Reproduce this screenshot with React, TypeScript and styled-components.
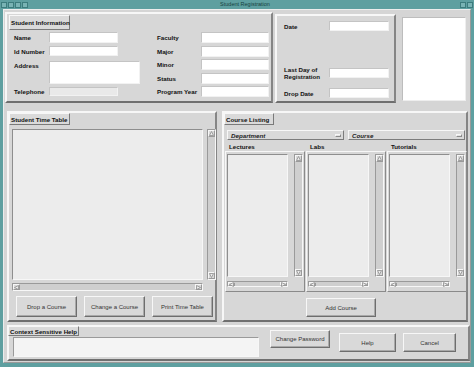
import React from 'react';
import styled, { createGlobalStyle } from 'styled-components';

const TEAL = '#5e9fa0';
const LIGHT = '#f7f7f7';
const DARK = '#858585';
const BG = '#d5d5d5';

const GlobalStyle = createGlobalStyle`
  * { box-sizing: border-box; }
  html, body { margin: 0; padding: 0; background: ${TEAL}; }
  body { font-family: "Liberation Sans", Arial, Helvetica, sans-serif; }
`;

const Window = styled.div`
  width: 474px;
  height: 367px;
  background: ${TEAL};
  display: flex;
  flex-direction: column;
  overflow: hidden;
`;

const TitleBar = styled.div`
  height: 9px;
  display: flex;
  align-items: center;
  padding: 0 1px;
`;

const WinGroup = styled.div<{ $end?: boolean }>`
  flex: 1;
  display: flex;
  gap: 1px;
  justify-content: ${(p) => (p.$end ? 'flex-end' : 'flex-start')};
`;

const WinBtn = styled.span`
  width: 6px;
  height: 6px;
  border: 1px solid #3c7c7d;
  background: #79b3b4;
`;

const Title = styled.span`
  font-size: 5.5px;
  color: #163f40;
  padding-left: 16px;
  line-height: 9px;
`;

const Frame = styled.div`
  flex: 1;
  margin: 0 3px 4px 3px;
  background: ${BG};
  border-top: 1px solid #ececec;
  border-left: 1px solid #ececec;
  border-right: 1px solid #9a9a9a;
  border-bottom: 1px solid #9a9a9a;
  display: flex;
  flex-direction: column;
`;

const Row = styled.div<{ $mt: number }>`
  display: flex;
  align-items: flex-start;
  margin-top: ${(p) => p.$mt}px;
`;

const Panel = styled.div<{ $w: number; $h: number; $ml: number; $mt?: number }>`
  width: ${(p) => p.$w}px;
  height: ${(p) => p.$h}px;
  margin-left: ${(p) => p.$ml}px;
  margin-top: ${(p) => p.$mt ?? 0}px;
  background: #d7d7d7;
  border: 2px solid;
  border-color: ${LIGHT} ${DARK} #6f6f6f ${LIGHT};
  display: flex;
  flex-direction: column;
  align-items: flex-start;
`;

const Tab = styled.div<{ $w: number; $h: number; $ml?: number; $mt?: number }>`
  width: ${(p) => p.$w}px;
  height: ${(p) => p.$h}px;
  margin-left: ${(p) => p.$ml ?? 0}px;
  margin-top: ${(p) => p.$mt ?? 0}px;
  background: #dadada;
  border: 1px solid;
  border-color: ${LIGHT} #7a7a7a #7a7a7a ${LIGHT};
  font-size: 6.2px;
  font-weight: bold;
  color: #111;
  display: flex;
  align-items: center;
  padding-left: 1px;
  white-space: nowrap;
`;

const InfoBody = styled.div`
  display: flex;
  margin-top: 2px;
  padding-left: 7px;
`;

const FieldColumn = styled.div<{ $w?: number; $ml?: number; $gap?: number }>`
  display: flex;
  flex-direction: column;
  width: ${(p) => (p.$w ? `${p.$w}px` : 'auto')};
  margin-left: ${(p) => p.$ml ?? 0}px;
  gap: ${(p) => p.$gap ?? 0}px;
`;

const FieldRow = styled.div<{ $mt?: number; $top?: boolean }>`
  display: flex;
  align-items: ${(p) => (p.$top ? 'flex-start' : 'center')};
  margin-top: ${(p) => p.$mt ?? 0}px;
`;

const Label = styled.span<{ $w: number; $pt?: number }>`
  width: ${(p) => p.$w}px;
  padding-top: ${(p) => p.$pt ?? 0}px;
  font-size: 6.2px;
  font-weight: bold;
  color: #111;
  line-height: 7px;
  white-space: nowrap;
`;

const Input = styled.div<{ $w: number; $h: number; $off?: boolean }>`
  width: ${(p) => p.$w}px;
  height: ${(p) => p.$h}px;
  background: ${(p) => (p.$off ? '#e9e9e9' : '#ffffff')};
  border: 1px solid;
  border-color: #c4c4c4 #f2f2f2 #f2f2f2 #c4c4c4;
`;

const DateGrid = styled.div`
  display: flex;
  flex-direction: column;
  padding: 5px 0 0 7px;
`;

const Photo = styled.div`
  width: 64px;
  height: 84px;
  margin-left: 6px;
  margin-top: 5px;
  background: #ffffff;
  border: 1px solid;
  border-color: #bdbdbd #eeeeee #eeeeee #bdbdbd;
`;

const ListArea = styled.div<{ $cols: string; $rows: string; $cg: number; $rg: number; $ml: number; $mt: number }>`
  display: grid;
  grid-template-columns: ${(p) => p.$cols};
  grid-template-rows: ${(p) => p.$rows};
  column-gap: ${(p) => p.$cg}px;
  row-gap: ${(p) => p.$rg}px;
  margin-left: ${(p) => p.$ml}px;
  margin-top: ${(p) => p.$mt}px;
`;

const ListBox = styled.div`
  background: #ececec;
  border: 1px solid;
  border-color: #8e8e8e ${LIGHT} ${LIGHT} #8e8e8e;
`;

const ScrollTrack = styled.div<{ $v?: boolean }>`
  display: flex;
  flex-direction: ${(p) => (p.$v ? 'column' : 'row')};
  justify-content: space-between;
  background: #cfcfcf;
  border: 1px solid;
  border-color: #9a9a9a ${LIGHT} ${LIGHT} #9a9a9a;
`;

const Arrow = styled.span<{ $v?: boolean }>`
  width: ${(p) => (p.$v ? '100%' : '7px')};
  height: ${(p) => (p.$v ? '7px' : '100%')};
  display: flex;
  align-items: center;
  justify-content: center;
  background: #d9d9d9;
  border: 1px solid;
  border-color: ${LIGHT} #9a9a9a #9a9a9a ${LIGHT};
`;

type Dir = 'up' | 'down' | 'left' | 'right';
const tri: Record<Dir, string> = {
  up: '2.5,0.5 4.5,4.5 0.5,4.5',
  down: '0.5,0.5 4.5,0.5 2.5,4.5',
  left: '0.5,2.5 4.5,0.5 4.5,4.5',
  right: '0.5,0.5 4.5,2.5 0.5,4.5',
};

const ArrowIcon: React.FC<{ dir: Dir }> = ({ dir }) => (
  <svg width="5" height="5" viewBox="0 0 5 5">
    <polygon points={tri[dir]} fill="#ececec" stroke="#8f8f8f" strokeWidth="0.8" />
  </svg>
);

const Scrollbar: React.FC<{ vertical?: boolean }> = ({ vertical }) => (
  <ScrollTrack $v={vertical}>
    <Arrow $v={vertical}>
      <ArrowIcon dir={vertical ? 'up' : 'left'} />
    </Arrow>
    <Arrow $v={vertical}>
      <ArrowIcon dir={vertical ? 'down' : 'right'} />
    </Arrow>
  </ScrollTrack>
);

const VSlot = styled.div`
  grid-row: 1;
  grid-column: 2;
  display: flex;
  & > * { flex: 1; }
`;

const HSlot = styled.div`
  grid-row: 2;
  grid-column: 1;
  display: flex;
  & > * { flex: 1; }
`;

const ButtonRow = styled.div<{ $ml: number; $mt: number; $gap: number }>`
  display: flex;
  gap: ${(p) => p.$gap}px;
  margin-left: ${(p) => p.$ml}px;
  margin-top: ${(p) => p.$mt}px;
`;

const Button = styled.button<{ $w: number; $h: number; $ml?: number; $mt?: number }>`
  width: ${(p) => p.$w}px;
  height: ${(p) => p.$h}px;
  margin-left: ${(p) => p.$ml ?? 0}px;
  margin-top: ${(p) => p.$mt ?? 0}px;
  padding: 0;
  background: #d9d9d9;
  border: 1px solid;
  border-color: ${LIGHT} #6e6e6e #6e6e6e ${LIGHT};
  box-shadow: inset -1px -1px 0 #a9a9a9;
  font-family: "Liberation Sans", Arial, sans-serif;
  font-size: 6px;
  color: #333;
  white-space: nowrap;
  flex-shrink: 0;
`;

const DropRow = styled.div`
  display: flex;
  gap: 4px;
  margin: 5px 0 0 3px;
`;

const Dropdown = styled.div`
  width: 117px;
  height: 10px;
  display: flex;
  align-items: center;
  justify-content: space-between;
  padding: 0 2px 0 3px;
  background: #d9d9d9;
  border: 1px solid;
  border-color: ${LIGHT} #7c7c7c #7c7c7c ${LIGHT};
  font-size: 6.2px;
  font-weight: bold;
  font-style: italic;
  color: #222;
`;

const DropMark = styled.span`
  width: 6px;
  height: 3px;
  background: #e2e2e2;
  border: 1px solid;
  border-color: ${LIGHT} #8a8a8a #8a8a8a ${LIGHT};
`;

const Columns = styled.div`
  display: grid;
  grid-template-columns: 80px 80px 80px;
  column-gap: 1px;
  margin: 2px 0 0 1px;
`;

const Column = styled.div`
  display: flex;
  flex-direction: column;
`;

const ColLabel = styled.div`
  height: 9px;
  padding-left: 4px;
  font-size: 6.2px;
  font-weight: bold;
  color: #111;
  line-height: 9px;
`;

const ColFrame = styled.div`
  height: 141px;
  border: 1px solid;
  border-color: ${LIGHT} #8a8a8a #8a8a8a ${LIGHT};
  padding: 2px 0 0 1px;
`;

const HelpLeft = styled.div`
  display: flex;
  flex-direction: column;
`;

const HelpText = styled.div`
  width: 246px;
  height: 20px;
  margin: 1px 0 0 4px;
  background: #f4f4f4;
  border: 1px solid;
  border-color: #9a9a9a ${LIGHT} ${LIGHT} #9a9a9a;
`;

const HelpRow = styled.div`
  display: flex;
  align-items: flex-start;
  width: 100%;
`;

const CourseColumn: React.FC<{ title: string }> = ({ title }) => (
  <Column>
    <ColLabel>{title}</ColLabel>
    <ColFrame>
      <ListArea $cols="61px 7px" $rows="123px 6px" $cg={6} $rg={4} $ml={0} $mt={0}>
        <ListBox />
        <VSlot>
          <Scrollbar vertical />
        </VSlot>
        <HSlot>
          <Scrollbar />
        </HSlot>
      </ListArea>
    </ColFrame>
  </Column>
);

export default function App() {
  return (
    <>
      <GlobalStyle />
      <Window>
        <TitleBar>
          <WinGroup>
            <WinBtn />
            <WinBtn />
            <WinBtn />
            <WinBtn />
          </WinGroup>
          <Title>Student Registration</Title>
          <WinGroup $end>
            <WinBtn />
            <WinBtn />
          </WinGroup>
        </TitleBar>
        <Frame>
          <Row $mt={2}>
            <Panel $w={268} $h={91} $ml={1}>
              <Tab $w={61} $h={15} $ml={2} $mt={1}>Student Information</Tab>
              <InfoBody>
                <FieldColumn $w={126}>
                  <FieldRow>
                    <Label $w={35}>Name</Label>
                    <Input $w={69} $h={11} />
                  </FieldRow>
                  <FieldRow $mt={3}>
                    <Label $w={35}>Id Number</Label>
                    <Input $w={69} $h={10} />
                  </FieldRow>
                  <FieldRow $mt={5} $top>
                    <Label $w={35} $pt={1}>Address</Label>
                    <Input $w={91} $h={23} />
                  </FieldRow>
                  <FieldRow $mt={3}>
                    <Label $w={35}>Telephone</Label>
                    <Input $w={69} $h={9} $off />
                  </FieldRow>
                </FieldColumn>
                <FieldColumn $ml={17} $gap={2.5}>
                  <FieldRow>
                    <Label $w={44}>Faculty</Label>
                    <Input $w={68} $h={11} />
                  </FieldRow>
                  <FieldRow>
                    <Label $w={44}>Major</Label>
                    <Input $w={68} $h={11} />
                  </FieldRow>
                  <FieldRow>
                    <Label $w={44}>Minor</Label>
                    <Input $w={68} $h={11} />
                  </FieldRow>
                  <FieldRow>
                    <Label $w={44}>Status</Label>
                    <Input $w={68} $h={11} />
                  </FieldRow>
                  <FieldRow>
                    <Label $w={44}>Program Year</Label>
                    <Input $w={68} $h={11} />
                  </FieldRow>
                </FieldColumn>
              </InfoBody>
            </Panel>
            <Panel $w={121} $h={89} $ml={2} $mt={2}>
              <DateGrid>
                <FieldRow>
                  <Label $w={45}>Date</Label>
                  <Input $w={60} $h={10} />
                </FieldRow>
                <FieldRow $mt={35}>
                  <Label $w={45}>
                    Last Day of
                    <br />
                    Registration
                  </Label>
                  <Input $w={60} $h={10} />
                </FieldRow>
                <FieldRow $mt={8}>
                  <Label $w={45}>Drop Date</Label>
                  <Input $w={60} $h={10} />
                </FieldRow>
              </DateGrid>
            </Panel>
            <Photo />
          </Row>

          <Row $mt={8}>
            <Panel $w={210} $h={211} $ml={3}>
              <Tab $w={61} $h={12}>Student Time Table</Tab>
              <ListArea $cols="191px 7px" $rows="151px 8px" $cg={4} $rg={3} $ml={3} $mt={4}>
                <ListBox />
                <VSlot>
                  <Scrollbar vertical />
                </VSlot>
                <HSlot>
                  <Scrollbar />
                </HSlot>
              </ListArea>
              <ButtonRow $ml={7} $mt={5} $gap={7}>
                <Button $w={61} $h={21}>Drop a Course</Button>
                <Button $w={61} $h={21}>Change a Course</Button>
                <Button $w={61} $h={21}>Print Time Table</Button>
              </ButtonRow>
            </Panel>
            <Panel $w={246} $h={211} $ml={5}>
              <Tab $w={50} $h={12}>Course Listing</Tab>
              <DropRow>
                <Dropdown>
                  Department
                  <DropMark />
                </Dropdown>
                <Dropdown>
                  Course
                  <DropMark />
                </Dropdown>
              </DropRow>
              <Columns>
                <CourseColumn title="Lectures" />
                <CourseColumn title="Labs" />
                <CourseColumn title="Tutorials" />
              </Columns>
              <Button $w={70} $h={19} $ml={82} $mt={6}>Add Course</Button>
            </Panel>
          </Row>

          <Row $mt={3}>
            <Panel $w={463} $h={36} $ml={3}>
              <HelpRow>
                <HelpLeft>
                  <Tab $w={71} $h={10} $ml={-1} $mt={-1}>Context Sensitive Help</Tab>
                  <HelpText />
                </HelpLeft>
                <Button $w={60} $h={18} $ml={11} $mt={3}>Change Password</Button>
                <Button $w={57} $h={19} $ml={9} $mt={6}>Help</Button>
                <Button $w={53} $h={19} $ml={7} $mt={6}>Cancel</Button>
              </HelpRow>
            </Panel>
          </Row>
        </Frame>
      </Window>
    </>
  );
}
